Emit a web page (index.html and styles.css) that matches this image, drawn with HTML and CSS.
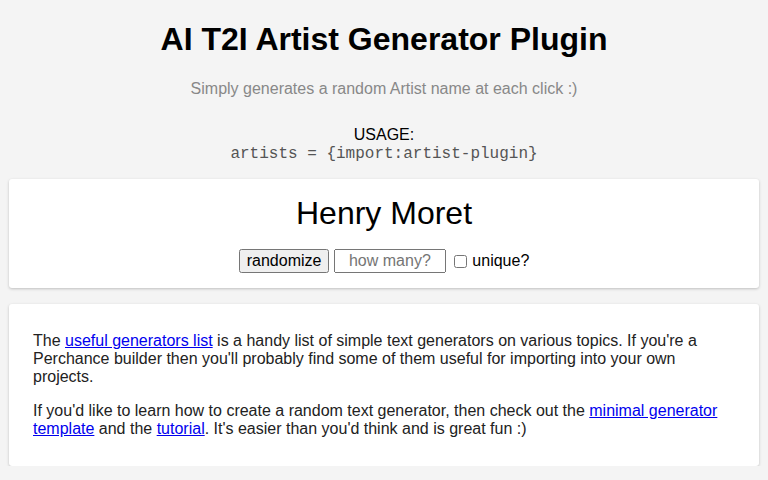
FILE: index.html
```html
<!DOCTYPE html>
<html>
<head>
<meta charset="utf-8">
<link rel="stylesheet" href="styles.css">
</head>
<body>
<div class="page">
  <header class="header">
    <h1 class="title">AI T2I Artist Generator Plugin</h1>
    <p class="subtitle">Simply generates a random Artist name at each click :)</p>
    <div class="usage">
      <div class="usage-label">USAGE:</div>
      <code class="usage-code">artists = {import:artist-plugin}</code>
    </div>
  </header>
  <section class="card output-card">
    <div class="output">Henry Moret</div>
    <div class="controls"><button class="btn">randomize</button> <input class="count" type="text" placeholder="how many?"> <input class="check" type="checkbox" id="unique"><label class="check-label" for="unique">unique?</label></div>
  </section>
  <section class="card info-card">
    <p>The <a href="#">useful generators list</a> is a handy list of simple text generators on various topics. If you're a Perchance builder then you'll probably find some of them useful for importing into your own projects.</p>
    <p>If you'd like to learn how to create a random text generator, then check out the <a href="#">minimal generator template</a> and the <a href="#">tutorial</a>. It's easier than you'd think and is great fun :)</p>
  </section>
</div>
</body>
</html>
```
FILE: styles.css
```css
html, body {
  margin: 0;
  padding: 0;
  background: #f4f4f4;
  font-family: "Liberation Sans", Arial, sans-serif;
  font-size: 16px;
  color: #000;
}
.page {
  padding: 0 9px;
}
.header {
  text-align: center;
  padding-top: 21px;
}
.title {
  margin: 0;
  font-size: 32px;
  font-weight: bold;
  line-height: 37px;
}
.subtitle {
  margin: 22px 0 0;
  color: #888;
  line-height: 18px;
}
.usage {
  margin-top: 28px;
  line-height: 18px;
}
.usage-code {
  display: block;
  margin-top: 1px;
  font-family: "Liberation Mono", "Courier New", monospace;
  font-size: 16px;
  color: #555;
  line-height: 19px;
}
.card {
  background: #fff;
  border-radius: 3px;
  box-shadow: 0 1px 3px rgba(0, 0, 0, 0.22);
}
.output-card {
  margin-top: 15px;
  padding: 16px 24px 15px;
  text-align: center;
}
.output {
  font-size: 32px;
  line-height: 37px;
}
.controls {
  margin-top: 17px;
  line-height: 22px;
}
.btn {
  font-family: "Liberation Sans", Arial, sans-serif;
  font-size: 16px;
  color: #000;
  padding: 1px 6px;
  vertical-align: middle;
}
.count {
  font-family: "Liberation Sans", Arial, sans-serif;
  font-size: 16px;
  width: 112px;
  box-sizing: border-box;
  text-align: center;
  vertical-align: middle;
}
.check {
  vertical-align: middle;
}
.check-label {
  vertical-align: middle;
  margin-left: 2px;
}
.info-card {
  margin-top: 16px;
  padding: 12px 24px 12px;
  line-height: normal;
  color: #222;
}
.info-card p {
  margin: 16px 0;
}
a {
  color: #0000ee;
}
```
